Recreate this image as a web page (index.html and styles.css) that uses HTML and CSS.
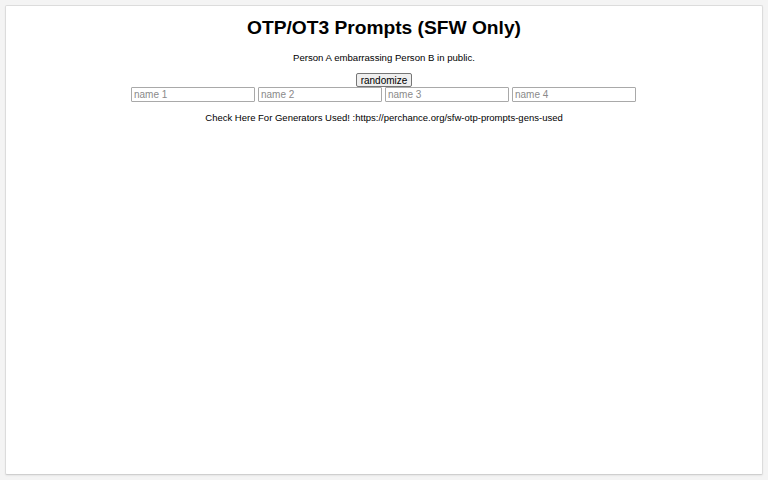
FILE: index.html
```html
<!DOCTYPE html>
<html>
<head>
  <meta charset="utf-8">
  <title>OTP/OT3 Prompts (SFW Only)</title>
  <link rel="stylesheet" href="styles.css">
</head>
<body>
  <div class="page">
    <h1 class="title">OTP/OT3 Prompts (SFW Only)</h1>
    <p class="prompt" id="output">Person A embarrassing Person B in public.</p>
    <div class="controls">
      <button type="button" class="button" id="randomize">randomize</button>
    </div>
    <div class="names">
      <input type="text" class="name-input" placeholder="name 1">
      <input type="text" class="name-input" placeholder="name 2">
      <input type="text" class="name-input" placeholder="name 3">
      <input type="text" class="name-input" placeholder="name 4">
    </div>
    <p class="credits">Check Here For Generators Used! :https://perchance.org/sfw-otp-prompts-gens-used</p>
  </div>
</body>
</html>
```
FILE: styles.css
```css
html, body {
  height: 100%;
}

body {
  font-family: 'Liberation Sans', Arial, sans-serif;
  margin: 0;
  padding: 5px;
  box-sizing: border-box;
  background: #f4f4f4;
}

.page {
  background: white;
  border: 1px solid #dcdcdc;
  border-bottom-color: #cfcfcf;
  border-radius: 2px;
  box-shadow: 0 1px 2px rgba(0,0,0,0.06);
  height: 100%;
  box-sizing: border-box;
  text-align: center;
  padding-top: 10px;
}

.title {
  margin: 0;
  font-size: 19.2px;
  font-weight: bold;
  color: #000;
  line-height: 24px;
}

.prompt {
  margin: 12px 0 0 0;
  font-size: 9.6px;
  line-height: 12px;
}

.controls {
  margin-top: 9px;
  line-height: 0;
}

.button {
  font-family: inherit;
  font-size: 10px;
  padding: 0 4px;
  height: 14px;
  line-height: 11px;
  border: 1px solid #767676;
  border-radius: 2px;
  background: #efefef;
  color: #000;
}

.names {
  display: flex;
  justify-content: center;
  gap: 3px;
  margin-right: 1px;
}

.name-input {
  width: 124px;
  height: 15px;
  box-sizing: border-box;
  padding: 0 2px;
  border: 1px solid #a9a9a9;
  border-radius: 1px;
  font-family: inherit;
  font-size: 10px;
}

.name-input::placeholder {
  color: #8a8a8a;
}

.credits {
  margin: 10px 0 0 0;
  font-size: 9.5px;
  line-height: 12px;
}
```
